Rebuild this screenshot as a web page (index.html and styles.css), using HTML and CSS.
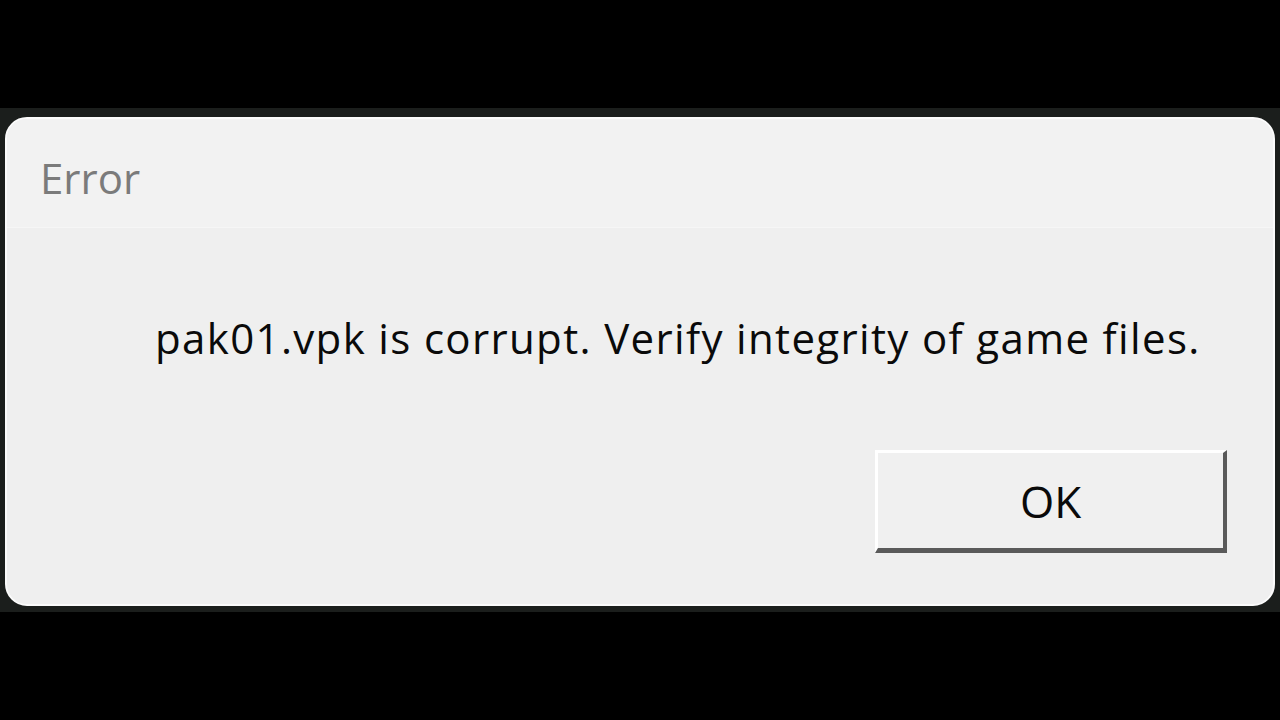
FILE: index.html
```html
<!DOCTYPE html>
<html>
<head>
<meta charset="utf-8">
<link rel="stylesheet" href="styles.css">
</head>
<body>
<div class="top-band"></div>
<div class="frame">
  <div class="dialog">
    <div class="titlebar"><span class="title">Error</span></div>
    <div class="content">
      <p class="message">pak01.vpk is corrupt. Verify integrity of game files.</p>
      <div class="actions"><button class="btn">OK</button></div>
    </div>
  </div>
</div>
</body>
</html>
```
FILE: styles.css
```css
html, body {
  margin: 0;
  padding: 0;
  background: #000;
  width: 1280px;
  height: 720px;
  overflow: hidden;
}
.top-band {
  height: 108px;
}
.frame {
  height: 504px;
  background: #1b1e1c;
  padding: 9px 5px 0 5px;
  box-sizing: border-box;
}
.dialog {
  height: 489px;
  box-sizing: border-box;
  border: 2px solid #fbfbfb;
  border-radius: 22px;
  background: #efefef;
  display: flex;
  flex-direction: column;
  overflow: hidden;
  font-family: "Open Sans", "Noto Sans", sans-serif;
}
.titlebar {
  height: 109px;
  background: #f2f2f2;
  border-bottom: 1px solid #f6f6f6;
  padding-left: 33px;
  box-sizing: border-box;
  display: flex;
  align-items: flex-start;
}
.title {
  color: #7b7b7b;
  font-size: 42px;
  line-height: 1;
  margin-top: 38px;
}
.content {
  flex: 1;
  display: flex;
  flex-direction: column;
}
.message {
  margin: 89px 0 0 148px;
  font-size: 42px;
  letter-spacing: 1.35px;
  line-height: 1;
  color: #0a0a0a;
  white-space: nowrap;
}
.actions {
  display: flex;
  justify-content: flex-end;
  padding-right: 46px;
  margin-top: 91px;
}
.btn {
  width: 352px;
  height: 103px;
  box-sizing: border-box;
  background: #f0f0f0;
  border-style: solid;
  border-width: 3px 4px 5px 3px;
  border-color: #ffffff #5a5a5a #5a5a5a #ffffff;
  font-family: "Open Sans", "Noto Sans", sans-serif;
  font-size: 44px;
  color: #0a0a0a;
  padding: 0;
}
```
